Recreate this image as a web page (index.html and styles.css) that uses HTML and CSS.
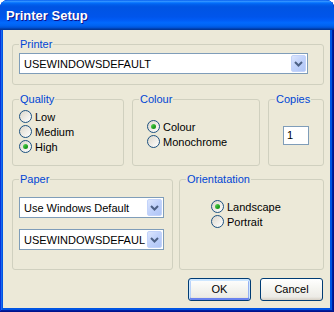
FILE: index.html
```html
<!DOCTYPE html>
<html>
<head>
<meta charset="utf-8">
<link rel="stylesheet" href="styles.css">
</head>
<body>
<div class="window">
  <div class="titlebar"><span class="title">Printer Setup</span></div>
  <div class="client">
    <fieldset class="group g-printer">
      <legend>Printer</legend>
      <div class="body b-printer">
        <div class="combo"><span class="val">USEWINDOWSDEFAULT</span><span class="drop"><svg width="9" height="6" viewBox="0 0 9 6"><polyline points="1,1 4.5,4.5 8,1" fill="none" stroke="#4D6185" stroke-width="2"/></svg></span></div>
      </div>
    </fieldset>
    <div class="row row-mid">
      <fieldset class="group g-quality">
        <legend>Quality</legend>
        <div class="body b-quality">
          <div class="radio"><span class="dot"></span><span>Low</span></div>
          <div class="radio"><span class="dot"></span><span>Medium</span></div>
          <div class="radio"><span class="dot on"></span><span>High</span></div>
        </div>
      </fieldset>
      <fieldset class="group g-colour">
        <legend>Colour</legend>
        <div class="body b-colour">
          <div class="radio"><span class="dot on"></span><span>Colour</span></div>
          <div class="radio"><span class="dot"></span><span>Monochrome</span></div>
        </div>
      </fieldset>
      <fieldset class="group g-copies">
        <legend>Copies</legend>
        <div class="body b-copies">
          <div class="textbox">1</div>
        </div>
      </fieldset>
    </div>
    <div class="row row-low">
      <fieldset class="group g-paper">
        <legend>Paper</legend>
        <div class="body b-paper">
          <div class="combo"><span class="val">Use Windows Default</span><span class="drop"><svg width="9" height="6" viewBox="0 0 9 6"><polyline points="1,1 4.5,4.5 8,1" fill="none" stroke="#4D6185" stroke-width="2"/></svg></span></div>
          <div class="combo second"><span class="val">USEWINDOWSDEFAUL</span><span class="drop"><svg width="9" height="6" viewBox="0 0 9 6"><polyline points="1,1 4.5,4.5 8,1" fill="none" stroke="#4D6185" stroke-width="2"/></svg></span></div>
        </div>
      </fieldset>
      <fieldset class="group g-orient">
        <legend>Orientatation</legend>
        <div class="body b-orient">
          <div class="radio"><span class="dot on"></span><span>Landscape</span></div>
          <div class="radio"><span class="dot"></span><span>Portrait</span></div>
        </div>
      </fieldset>
    </div>
    <div class="buttons">
      <div class="btn default">OK</div>
      <div class="btn">Cancel</div>
    </div>
  </div>
</div>
</body>
</html>
```

FILE: styles.css
```css
html, body {
  margin: 0;
  padding: 0;
  background: #ffffff;
}

.window {
  width: 334px;
  height: 312px;
  box-sizing: border-box;
  display: flex;
  flex-direction: column;
  padding: 0 4px 4px 3px;
  background: #0054E3;
  border-radius: 8px 8px 0 0;
  box-shadow: inset -1px -1px #00138C, inset 1px 1px #0831D9, inset -2px -2px #001EA0, inset 2px 2px #166AEE;
  font: 11px "Liberation Sans", Arial, sans-serif;
  color: #000;
}

.titlebar {
  height: 30px;
  box-sizing: border-box;
  margin: 0 -4px 0 -3px;
  padding: 2px 0 0 6px;
  border-radius: 8px 8px 0 0;
  background: linear-gradient(to bottom, #0058EE 0%, #3593FF 4%, #288EFF 6%, #127DFF 8%, #036FFC 10%, #0262EE 14%, #0057E5 20%, #0054E3 24%, #0055EB 56%, #005BF5 66%, #026AFE 76%, #0062EF 86%, #0052D6 92%, #0040AB 96%, #003092 100%);
}

.title {
  display: block;
  font: bold 13px/28px "Liberation Sans", Arial, sans-serif;
  color: #ffffff;
  text-shadow: 1px 1px #0F1089;
}

.client {
  flex: 1;
  background: #ECE9D8;
  padding: 8px 6px 0 9px;
  display: flex;
  flex-direction: column;
}

.group {
  margin: 0;
  padding: 0;
  min-width: 0;
  border: 1px solid #D0D0BF;
  border-radius: 3px;
}

.group legend {
  margin-left: 6px;
  padding: 0 1px;
  line-height: 13px;
  color: #0046D5;
}

.b-printer { padding: 2px 15px 10px 6px; }

.row {
  display: flex;
  align-items: stretch;
}

.row-mid {
  margin-top: 8px;
  height: 73px;
  gap: 8px;
}

.row-low {
  margin-top: 7px;
  height: 97px;
  gap: 6px;
}

.g-quality { width: 112px; box-sizing: border-box; }
.g-colour { width: 128px; box-sizing: border-box; }
.g-copies { width: 56px; box-sizing: border-box; }
.g-paper { width: 161px; box-sizing: border-box; }
.g-orient { width: 145px; box-sizing: border-box; }

.b-quality { padding: 3px 0 0 6px; }
.b-colour { padding: 13px 0 0 14px; }
.b-copies { padding: 20px 0 0 14px; }
.b-paper { padding: 11px 8px 0 6px; }
.b-orient { padding: 13px 0 0 31px; }

.combo {
  height: 21px;
  box-sizing: border-box;
  border: 1px solid #7F9DB9;
  background: #ffffff;
  padding: 1px;
  display: flex;
}

.combo.second { margin-top: 11px; }

.combo .val {
  flex: 1;
  min-width: 0;
  overflow: hidden;
  white-space: nowrap;
  padding-left: 3px;
  line-height: 18px;
}

.combo .drop {
  width: 15px;
  flex: none;
  box-sizing: border-box;
  border: 1px solid #C3D3FA;
  border-radius: 2px;
  background: linear-gradient(135deg, #DCE6FD 0%, #C2D3FB 45%, #AFC5F6 100%);
  display: flex;
  align-items: center;
  justify-content: center;
}

.radio {
  height: 15px;
  display: flex;
  align-items: center;
  gap: 3px;
  white-space: nowrap;
}

.dot {
  width: 13px;
  height: 13px;
  box-sizing: border-box;
  border-radius: 50%;
  border: 1px solid #1C5180;
  background: linear-gradient(135deg, #DCD7CB 0%, #FFFFFF 100%);
  display: flex;
  align-items: center;
  justify-content: center;
  flex: none;
}

.dot.on::before {
  content: "";
  width: 5px;
  height: 5px;
  border-radius: 50%;
  background: linear-gradient(135deg, #63DC5E 0%, #21A121 60%, #0E8A0E 100%);
}

.textbox {
  width: 26px;
  height: 19px;
  box-sizing: border-box;
  border: 1px solid #7F9DB9;
  background: #ffffff;
  padding-left: 3px;
  line-height: 17px;
}

.buttons {
  margin-top: 8px;
  display: flex;
  justify-content: flex-end;
  gap: 9px;
  padding-right: 1px;
}

.btn {
  width: 63px;
  height: 23px;
  box-sizing: border-box;
  border: 1px solid #003C74;
  border-radius: 3px;
  background: linear-gradient(to bottom, #FFFFFF 0%, #F6F6F2 40%, #ECEBE6 85%, #D6D0C5 100%);
  text-align: center;
  line-height: 21px;
}

.btn.default {
  box-shadow: inset 0 1px 0 1px #CEE7FF, inset 0 -1px 0 1px #6982EE, inset 1px 0 0 1px #B8D2FA, inset -1px 0 0 1px #96B1F1;
}
```
